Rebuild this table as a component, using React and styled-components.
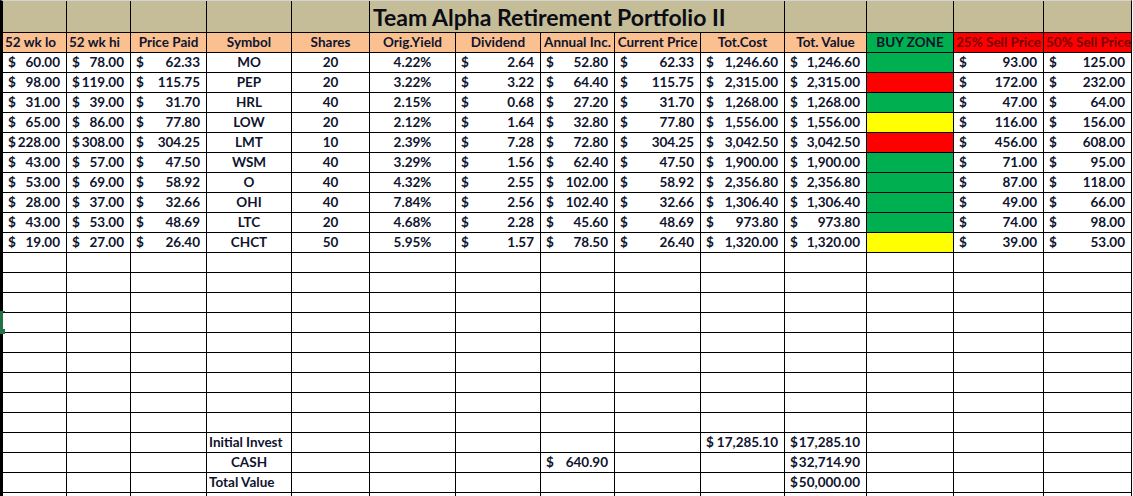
import React from "react";
import styled, { createGlobalStyle } from "styled-components";

const GlobalStyle = createGlobalStyle`
  html, body {
    margin: 0;
    padding: 0;
    overflow: hidden;
    background: #fff;
  }
  body {
    font-family: Lato, "Liberation Sans", sans-serif;
  }
`;

const COLS = [63, 63, 75, 84, 77, 85, 84, 73, 85, 83, 81, 86, 89, 87];

const TAN = "#c4bd97";
const PEACH = "#fac090";
const GREEN = "#00b050";
const RED = "#ff0000";
const YELLOW = "#ffff00";

const Page = styled.div`
  position: relative;
  width: 1133px;
  height: 496px;
  overflow: hidden;
`;

const Sheet = styled.div`
  display: grid;
  grid-template-columns: ${COLS.map((c) => c + "px").join(" ")};
  grid-template-rows: 31px;
  grid-auto-rows: 19px;
  gap: 1px;
  width: max-content;
  background: #000;
  border-left: 3px solid #000;
  border-right: 1px solid #000;
  border-top: 1px solid #d4d4d4;
`;

const Cell = styled.div`
  background: ${(p) => p.$bg || "#fff"};
  color: ${(p) => p.$color || "#10142e"};
  font-size: 13.5px;
  font-weight: 700;
  display: flex;
  align-items: center;
  justify-content: ${(p) =>
    p.$align === "left" ? "flex-start" : p.$align === "right" ? "flex-end" : "center"};
  padding: 1px ${(p) => (p.$align === "left" ? "2px" : "3px")} 0;
  white-space: nowrap;
  overflow: hidden;
  line-height: 1;
`;

const MoneyCell = styled(Cell)`
  justify-content: space-between;
  padding: 1px 6px 0 5px;
`;

const TitleCell = styled(Cell)`
  grid-column: span 5;
  justify-content: flex-start;
  padding: 2px 0 0 3px;
  font-size: 23px;
  color: #0c0c14;
`;

const Selection = styled.div`
  position: absolute;
  left: 0;
  top: 311px;
  width: 3px;
  height: 20px;
  background: #217346;
  &::before {
    content: "";
    position: absolute;
    left: 0;
    top: 0;
    width: 5px;
    height: 1px;
    background: #217346;
  }
  &::after {
    content: "";
    position: absolute;
    left: 0;
    top: 18px;
    width: 5px;
    height: 5px;
    background: #217346;
  }
`;

const Money = ({ v }) => (
  <MoneyCell>
    <span>$</span>
    <span>{v}</span>
  </MoneyCell>
);

const HEADERS = [
  ["52 wk lo", PEACH, "left"],
  ["52 wk hi", PEACH, "left"],
  ["Price Paid", PEACH],
  ["Symbol", PEACH],
  ["Shares", PEACH],
  ["Orig.Yield", PEACH],
  ["Dividend", PEACH],
  ["Annual Inc.", PEACH],
  ["Current Price", PEACH],
  ["Tot.Cost", PEACH],
  ["Tot. Value", PEACH],
  ["BUY ZONE", GREEN],
  ["25% Sell Price", RED, "left", "#7a0000"],
  ["50% Sell Price", RED, "left", "#7a0000"],
];

const ROWS = [
  ["60.00", "78.00", "62.33", "MO", 20, "4.22%", "2.64", "52.80", "62.33", "1,246.60", "1,246.60", GREEN, "93.00", "125.00"],
  ["98.00", "119.00", "115.75", "PEP", 20, "3.22%", "3.22", "64.40", "115.75", "2,315.00", "2,315.00", RED, "172.00", "232.00"],
  ["31.00", "39.00", "31.70", "HRL", 40, "2.15%", "0.68", "27.20", "31.70", "1,268.00", "1,268.00", GREEN, "47.00", "64.00"],
  ["65.00", "86.00", "77.80", "LOW", 20, "2.12%", "1.64", "32.80", "77.80", "1,556.00", "1,556.00", YELLOW, "116.00", "156.00"],
  ["228.00", "308.00", "304.25", "LMT", 10, "2.39%", "7.28", "72.80", "304.25", "3,042.50", "3,042.50", RED, "456.00", "608.00"],
  ["43.00", "57.00", "47.50", "WSM", 40, "3.29%", "1.56", "62.40", "47.50", "1,900.00", "1,900.00", GREEN, "71.00", "95.00"],
  ["53.00", "69.00", "58.92", "O", 40, "4.32%", "2.55", "102.00", "58.92", "2,356.80", "2,356.80", GREEN, "87.00", "118.00"],
  ["28.00", "37.00", "32.66", "OHI", 40, "7.84%", "2.56", "102.40", "32.66", "1,306.40", "1,306.40", GREEN, "49.00", "66.00"],
  ["43.00", "53.00", "48.69", "LTC", 20, "4.68%", "2.28", "45.60", "48.69", "973.80", "973.80", GREEN, "74.00", "98.00"],
  ["19.00", "27.00", "26.40", "CHCT", 50, "5.95%", "1.57", "78.50", "26.40", "1,320.00", "1,320.00", YELLOW, "39.00", "53.00"],
];

// summary rows: column index -> content
const SUMMARY = [
  { 3: { text: "Initial Invest", align: "left" }, 9: { money: "17,285.10" }, 10: { money: "17,285.10" } },
  { 3: { text: "CASH" }, 7: { money: "640.90" }, 10: { money: "32,714.90" } },
  { 3: { text: "Total Value", align: "left" }, 10: { money: "50,000.00" } },
];

const blankRow = (key) => COLS.map((_, i) => <Cell key={`${key}-${i}`} />);

const App = () => {
  return (
    <Page>
      <GlobalStyle />
      <Sheet>
        {[0, 1, 2, 3, 4].map((i) => (
          <Cell key={`t${i}`} $bg={TAN} />
        ))}
        <TitleCell $bg={TAN}>Team Alpha Retirement Portfolio II</TitleCell>
        {[10, 11, 12, 13].map((i) => (
          <Cell key={`t${i}`} $bg={TAN} />
        ))}

        {HEADERS.map(([label, bg, align, color]) => (
          <Cell key={label} $bg={bg} $align={align} $color={color}>
            {label}
          </Cell>
        ))}

        {ROWS.map((r) => (
          <React.Fragment key={r[3]}>
            <Money v={r[0]} />
            <Money v={r[1]} />
            <Money v={r[2]} />
            <Cell>{r[3]}</Cell>
            <Cell>{r[4]}</Cell>
            <Cell>{r[5]}</Cell>
            <Money v={r[6]} />
            <Money v={r[7]} />
            <Money v={r[8]} />
            <Money v={r[9]} />
            <Money v={r[10]} />
            <Cell $bg={r[11]} />
            <Money v={r[12]} />
            <Money v={r[13]} />
          </React.Fragment>
        ))}

        {Array.from({ length: 9 }).map((_, i) => (
          <React.Fragment key={`b${i}`}>{blankRow(`b${i}`)}</React.Fragment>
        ))}

        {SUMMARY.map((row, ri) => (
          <React.Fragment key={`s${ri}`}>
            {COLS.map((_, ci) => {
              const c = row[ci];
              if (!c) return <Cell key={`s${ri}-${ci}`} />;
              if (c.money) return <Money key={`s${ri}-${ci}`} v={c.money} />;
              return (
                <Cell key={`s${ri}-${ci}`} $align={c.align}>
                  {c.text}
                </Cell>
              );
            })}
          </React.Fragment>
        ))}

        {blankRow("end")}
      </Sheet>
      <Selection />
    </Page>
  );
};

export default App;
